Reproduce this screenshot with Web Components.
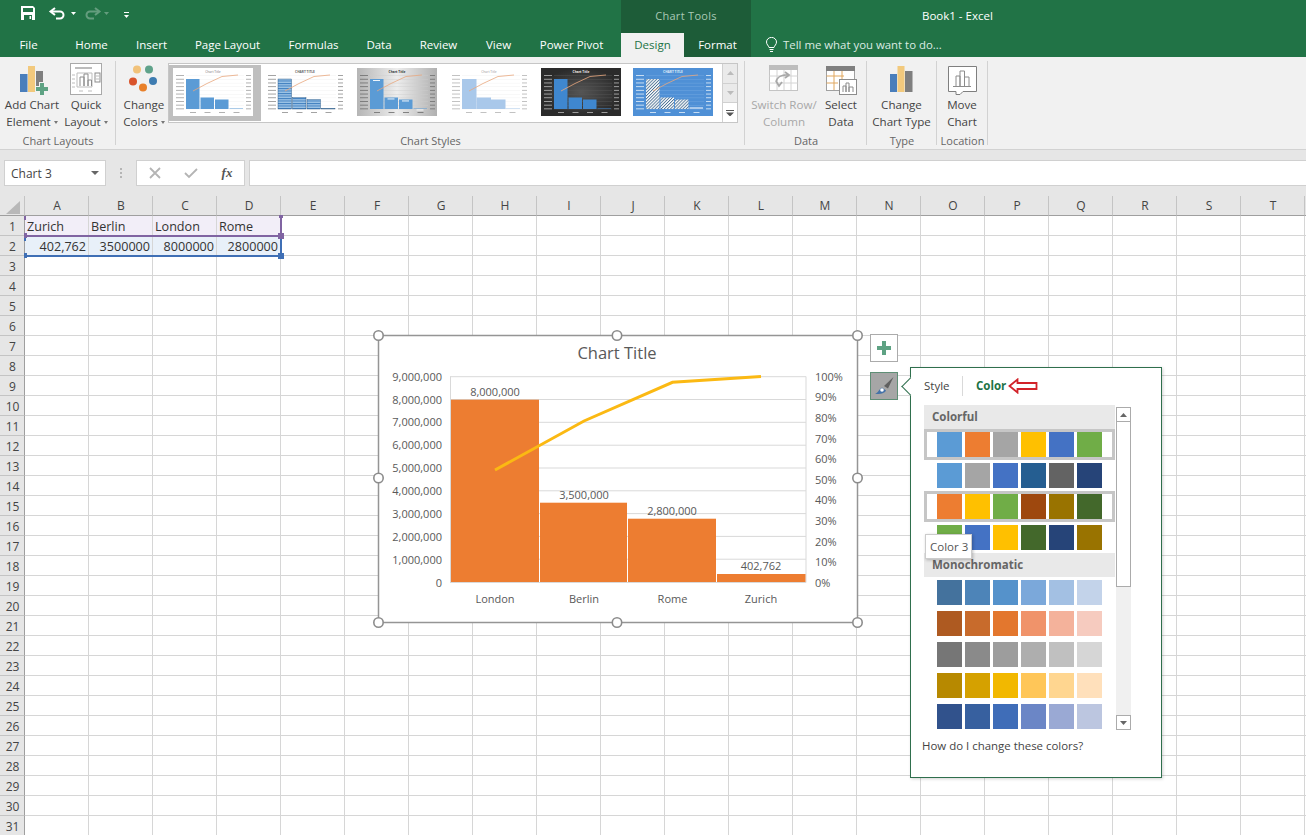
<!DOCTYPE html>
<html lang="en"><head><meta charset="utf-8"><title>Book1 - Excel</title>
<style>
html,body{margin:0;padding:0;width:1306px;height:835px;overflow:hidden;background:#fff;font-family:"Open Sans","Liberation Sans",sans-serif;font-size:11.5px;color:#444}
x-app{display:flex;flex-direction:column;width:1306px;height:835px;overflow:hidden}
svg{display:block}
</style>
<script>
function def(tag,css,html,setup){customElements.define(tag,class extends HTMLElement{
 constructor(){super();const r=this.attachShadow({mode:'open'});r.innerHTML='<style>'+css+'</style>'+html;}
 connectedCallback(){if(setup&&!this._d){this._d=1;setup(this,this.shadowRoot);}}
});}
def('x-titlebar',`
:host{display:grid;grid-template-rows:33px 24px;background:#217346;color:#fff;flex:none}
.top,.tabs{display:flex;align-items:stretch}
.qat{width:621px;display:flex;align-items:flex-start}
.ctx{background:#1d5c38}
.ctxt{width:130px;display:flex;align-items:center;justify-content:center;color:#a9c9b6;font-size:11px;letter-spacing:.3px;padding-bottom:2px;box-sizing:border-box}
.title{flex:1;display:flex;align-items:center;padding-left:171px;font-size:11.5px;padding-bottom:2px}
.fmt{display:flex}
.tell{display:flex;align-items:center;gap:5px;padding:0 0 1px 14px;color:#dcebe2;font-size:11.4px}
`,`<div class="top"><div class="qat"><slot name="qat"></slot></div><div class="ctxt ctx">Chart Tools</div><div class="title">Book1 - Excel</div></div>
<div class="tabs"><slot name="tabs"></slot><div class="fmt ctx"><slot name="ctx"></slot></div><div class="tell"><svg width="13" height="15" viewBox="0 0 13 15" fill="none" stroke="#fff" stroke-width="1"><path d="M4 10.500C3.600 8.600 1.500 7.600 1.500 5A5 4.600 0 0 1 11.500 5C11.500 7.600 9.400 8.600 9 10.500Z"/><path d="M4.500 12.500H8.500M5 14.500H8"/></svg><span>Tell me what you want to do...</span></div></div>`);
def('x-qat','.q{display:flex;align-items:center}:host{display:block}',`<div class="q">
<svg width="130" height="26" viewBox="0 0 130 26" fill="#fff"><path fill-rule="evenodd" d="M21 6H33L35 8V20H21ZM23 8V12H33V8ZM24 15V20H32V15Z"/><rect x="29.500" y="16" width="1.600" height="3"/>
<path d="M55 8L50.500 11.500L55 15" fill="none" stroke="#fff" stroke-width="2"/><path d="M51 11.500H60A3.500 3.500 0 0 1 60 18.500H56" fill="none" stroke="#fff" stroke-width="2"/><path d="M71 12H76L73.500 15Z"/>
<g opacity=".3"><path d="M95 8L99.500 11.500L95 15" fill="none" stroke="#fff" stroke-width="2"/><path d="M99 11.500H90A3.500 3.500 0 0 0 90 18.500H94" fill="none" stroke="#fff" stroke-width="2"/><path d="M104 12H109L106.500 15Z"/></g>
<rect x="124" y="12" width="5" height="1"/><path d="M124 15H129L126.500 18Z"/></svg></div>`);
def('x-tab',`:host{display:flex;align-items:center;justify-content:center;color:#fff;font-size:11.5px;flex:none;box-sizing:border-box;padding-bottom:1.500px}
:host([active]){background:#f1f1f1;color:#217346}`,'<slot></slot>',e=>{e.style.width=e.getAttribute('w')+'px';});
def('x-ribbon',`:host{display:flex;height:93px;background:#f1f1f1;border-bottom:1px solid #d2d2d2;box-sizing:border-box;flex:none}`,'<slot></slot>');
def('x-ribbon-group',`:host{display:flex;flex-direction:column;box-sizing:border-box;position:relative;flex:none}
.c{display:flex;padding-top:5px;height:66px}
.l{height:16px;margin-top:4px;display:flex;align-items:center;justify-content:center;color:#666;font-size:11px}
.s{position:absolute;right:0;top:4px;bottom:4px;width:1px;background:#d2d2d2}`,
`<div class="c"><slot></slot></div><div class="l"></div><div class="s"></div>`,(e,r)=>{e.style.width=e.getAttribute('w')+'px';r.querySelector('.l').textContent=e.getAttribute('label');if(e.hasAttribute('pad'))r.querySelector('.c').style.paddingLeft=e.getAttribute('pad')+'px';});
def('x-ribbon-button',`:host{display:flex;flex-direction:column;align-items:center;flex:none;color:#444;font-size:11.6px;line-height:16.500px;white-space:nowrap;text-align:center}
:host([disabled]){color:#a8a8a8}
.i{height:34px;margin-bottom:1px}.t{display:block}
.car{display:none;width:0;height:0;border:2.500px solid transparent;border-top:3px solid #777;border-bottom:0;margin-left:3px;vertical-align:middle}
:host([caret]) .car{display:inline-block}`,
`<div class="i"><slot name="icon"></slot></div><div class="t"><slot></slot><span class="car"></span></div>`,e=>{e.style.width=e.getAttribute('w')+'px';});
function thumb(v){
 const c=[{},{bg:'#fff',bar:'#5b9bd5',t:'Chart Title',tc:'#777',lab:'#aaa',gr:'#eee'},
 {bg:'#fff',bar:'url(#st)',st:'#1f4e79',t:'CHART TITLE',tc:'#666',lab:'#999',gr:'#eee',b:1},
 {bg:'url(#gg)',bar:'#5b9bd5',t:'Chart Title',tc:'#333',lab:'#777',gr:'#ccc',b:1,dl:'#fff'},
 {bg:'#fff',bar:'#a9c8ea',t:'Chart Title',tc:'#999',lab:'#bbb',gr:'#eee',join:1},
 {bg:'url(#dk)',bar:'#3f87cf',t:'Chart Title',tc:'#eee',lab:'#aaa',gr:'#5a5a5a',b:1},
 {bg:'#4f90d6',bar:'url(#ha)',t:'CHART TITLE',tc:'#dfeefa',lab:'#d5e6f6',gr:'#79abe2',b:1}][v];
 let s=`<svg width="80" height="48" viewBox="0 0 80 48"><defs>
 <pattern id="st" width="4" height="2.500" patternUnits="userSpaceOnUse"><rect width="4" height="2.500" fill="#9cc3e6"/><rect width="4" height="1" fill="#3f7fbf"/></pattern>
 <pattern id="ha" width="2.200" height="2.200" patternUnits="userSpaceOnUse" patternTransform="rotate(45)"><rect width="2.200" height="2.200" fill="#fff"/><rect width=".9" height="2.200" fill="#4a6f91"/></pattern>
 <linearGradient id="gg" x1="0" y1="0" x2="1" y2="0"><stop offset="0" stop-color="#b5b5b5"/><stop offset=".5" stop-color="#ededed"/><stop offset="1" stop-color="#b0b0b0"/></linearGradient>
 <radialGradient id="dk"><stop offset="0" stop-color="#555"/><stop offset="1" stop-color="#2b2b2b"/></radialGradient></defs>
 <rect width="80" height="48" fill="${c.bg}"/><text x="40" y="4.500" text-anchor="middle" font-size="3.200" font-weight="${c.b?700:400}" fill="${c.tc}">${c.t}</text>`;
 for(let i=0;i<10;i++){const y=7.500+i*3.700;s+=`<rect x="13" y="${y}" width="58" height=".4" fill="${c.gr}"/><rect x="3" y="${y-.4}" width="8" height=".9" fill="${c.lab}"/><rect x="73" y="${y-.4}" width="5" height=".9" fill="${c.lab}"/>`;}
 const g=c.join?0:1,bars=[[13,11],[27.500,29.500],[42,31.500],[56.500,40.500]];
 bars.forEach(([x,y],i)=>{const w=14.500-g;if(v==6&&i==3)s+=`<rect x="${x}" y="39.500" width="${w}" height="1" fill="#fff"/>`;else s+=`<rect x="${x}" y="${y}" width="${w}" height="${41-y}" fill="${c.bar}"${c.st?` stroke="${c.st}" stroke-width=".4"`:''}/>`;
 if(c.dl)s+=`<rect x="${x+3}" y="${y+1}" width="7" height=".9" fill="${c.dl}"/>`;
 s+=`<rect x="${x+4}" y="44" width="6" height=".9" fill="${c.lab}"/>`;});
 s+=`<path d="M20 23L34 15.500L49 8.500L65 7" fill="none" stroke="#e9a77e" stroke-width=".8"/></svg>`;return s;}
def('x-thumb',`:host{display:flex;align-items:center;padding-left:4px;box-sizing:border-box;width:92px;height:56px;flex:none}
:host([selected]){background:#bfbfbf}`,'<div></div>',(e,r)=>{r.querySelector('div').innerHTML=thumb(+e.getAttribute('v'));});
def('x-gallery',`:host{display:flex;width:570px;height:60px;box-sizing:border-box;border:1px solid #c6c6c6;background:#fff;margin-top:1px;flex:none}
.t{display:flex;flex:1;padding:1px 0 0 0;height:56px}
.sb{width:14px;display:flex;flex-direction:column;border-left:1px solid #d0d0d0}
.sb div{flex:1;display:flex;align-items:center;justify-content:center;border-bottom:1px solid #d0d0d0;background:#eaeaea}
.sb div:last-child{background:#fff;border-bottom:0}`,
`<div class="t"><slot></slot></div><div class="sb"><div><svg width="7" height="4"><path d="M0 4H7L3.500 0Z" fill="#bbb"/></svg></div><div><svg width="7" height="4"><path d="M0 0H7L3.500 4Z" fill="#bbb"/></svg></div><div><svg width="8" height="6"><path d="M0 0H8V1H0ZM0 2.500H8L4 6.500Z" fill="#555"/></svg></div></div>`);
def('x-formula-bar',`:host{display:flex;height:46px;box-sizing:border-box;padding:10px 0 10px 4px;background:#e6e6e6;flex:none}
.box{background:#fff;border:1px solid #d0d0d0;box-sizing:border-box;height:26px;display:flex;align-items:center}
.n{width:102px;padding:0 6px;justify-content:space-between;font-size:12px;color:#444}
.d{width:30px;display:flex;flex-direction:column;align-items:center;justify-content:center;gap:2px}
.d i{width:2px;height:2px;background:#b5b5b5;display:block}
.b{width:109px;display:grid;grid-template-columns:36px 36px 36px;justify-items:center}
.f{flex:1;margin-left:4px;border-right:0}
.fx{font:italic 700 13px "Liberation Serif",serif;color:#555}`,
`<div class="box n"><span>Chart 3</span><svg width="8" height="4"><path d="M0 0H8L4 4Z" fill="#666"/></svg></div>
<div class="d"><i></i><i></i><i></i></div>
<div class="box b"><svg width="12" height="12" fill="none" stroke="#b4b4b4" stroke-width="1.800"><path d="M1 1L11 11M11 1L1 11"/></svg><svg width="14" height="12" fill="none" stroke="#b4b4b4" stroke-width="1.800"><path d="M1 6L5 10L13 2"/></svg><span class="fx">fx</span></div>
<div class="box f"></div>`);
def('x-sheet',`:host{display:block;position:relative;flex:1;overflow:hidden;background:#fff}
.g{display:grid;grid-template-columns:25px repeat(20,64px) 1fr;grid-auto-rows:20px;font-size:12.600px;color:#333}
.g div{box-sizing:border-box;border-right:1px solid #d6d6d6;border-bottom:1px solid #d6d6d6;display:flex;align-items:center;padding:1px 2px 0;white-space:nowrap;overflow:hidden}
.g .h{background:#e6e6e6;justify-content:center;color:#444;font-size:12px;border-right-color:#c4c4c4;border-bottom-color:#c4c4c4;padding:1px 0 0 1px}
.g .ch{border-bottom-color:#9f9f9f;padding-top:0}
.g .rh{border-right-color:#9f9f9f}
.g .r{justify-content:flex-end;background:#e8f0f9}
.g .p{background:#f2eef8}
.tri{width:0;height:0;border-style:solid;border-width:0 0 13px 14px;border-color:transparent transparent #b8b8b8 transparent;margin-top:3px}`,
`<div class="g"></div><slot></slot>`,(e,r)=>{
 const d=[['Zurich','Berlin','London','Rome'],['402,762','3500000','8000000','2800000']];
 let h='<div class="h ch"><span class="tri"></span></div>';
 for(let c=0;c<20;c++)h+=`<div class="h ch">${String.fromCharCode(65+c)}</div>`;
 h+='<div class="h ch"></div>';
 for(let i=1;i<=31;i++){h+=`<div class="h rh">${i}</div>`;
  for(let c=0;c<21;c++){if(i<=2&&c<4)h+=i==1?`<div class="p">${d[0][c]}</div>`:`<div class="r">${d[1][c]}</div>`;else h+='<div></div>';}}
 r.querySelector('.g').innerHTML=h;});
def('x-range',`:host{position:absolute;box-sizing:border-box;border-right:2px solid var(--c);border-bottom:2px solid var(--c)}
i{position:absolute;background:var(--c);display:block}
.br{width:6px;height:6px;right:-4px;bottom:-4px}.tl{width:2px;height:4px;left:-1px;top:0}.bl{width:3px;height:5px;left:-1px;bottom:-3px}.tr{width:4px;height:3px;right:-3px;top:-1px}`,
`<i class="br"></i><i class="tl"></i><i class="bl"></i><i class="tr"></i>`);
const cy=[376,399,421,444,467,490,513,536,559,582],py=[376,396,417,438,458,479,499,520,541,561,582];
def('x-chart',`:host{position:absolute;left:370px;top:129px;width:500px;height:310px}
text{font-size:11px;fill:#595959;dominant-baseline:central}.t{font-size:16.500px;text-anchor:middle}.m{text-anchor:middle}.e{text-anchor:end}`,
`<svg width="500" height="310" viewBox="370 325 500 310"></svg>`,(e,r)=>{
 let s=`<rect x="378.500" y="335.500" width="479" height="287" fill="#fff" stroke="#959595" stroke-width="1.500"/><text class="t" x="617" y="352">Chart Title</text>`;
 const gy=[376.700,399.500,422.300,445.200,468,490.800,513.600,536.400,559.200];
 gy.forEach(y=>s+=`<rect x="450" y="${y-.5}" width="356" height="1" fill="#d9d9d9"/>`);
 s+=`<rect x="450" y="376.500" width="1" height="206" fill="#d9d9d9"/><rect x="805.500" y="376.500" width="1" height="206" fill="#d9d9d9"/><rect x="450" y="582" width="356" height="1" fill="#d9d9d9"/>`;
 [[451,399.700,88],[540,502.700,87],[628,518.700,88],[717,574,88.500]].forEach(([x,y,w])=>s+=`<rect x="${x}" y="${y}" width="${w}" height="${582-y}" fill="#ed7d31"/>`);
 s+=`<path d="M495 470L584 421L672.500 382.300L761 376.500" fill="none" stroke="#fbb913" stroke-width="3"/>`;
 cy.forEach((y,i)=>s+=`<text class="e" x="442" y="${y}">${i==9?'0':(9-i)+',000,000'}</text>`);
 py.forEach((y,i)=>s+=`<text x="815" y="${y}">${100-i*10}%</text>`);
 [['8,000,000',495,391],['3,500,000',584,494],['2,800,000',672,510],['402,762',761,565],['London',495,598],['Berlin',584,598],['Rome',672.500,598],['Zurich',761,598]].forEach(([t,x,y])=>s+=`<text class="m" x="${x}" y="${y}">${t}</text>`);
 [[378.500,335.500],[617,335.500],[857.500,335.500],[378.500,478],[857.500,478],[378.500,622.500],[617,622.500],[857.500,622.500]].forEach(([x,y])=>s+=`<circle cx="${x}" cy="${y}" r="4.700" fill="#fff" stroke="#8c8c8c" stroke-width="1.600"/>`);
 r.querySelector('svg').innerHTML=s;});
def('x-side-buttons',`:host{position:absolute;left:870px;top:138px;display:flex;flex-direction:column;gap:10px}
div{width:28px;height:28px;box-sizing:border-box;display:flex;align-items:center;justify-content:center;background:#fff;border:1px solid #ababab}
.on{background:#a6a6a6;border-color:#5f8f76}`,
`<div><svg width="14" height="14"><path d="M5 0H9V5H14V9H9V14H5V9H0V5H5Z" fill="#5ea283"/></svg></div>
<div class="on"><svg width="26" height="26" viewBox="0 0 26 26"><path d="M22.500 4L17 15.500L13 13Z" fill="#606060"/><path d="M4 21C7 20 8 16 11 14.500L15 17.500C14 20 10 21.500 4 21Z" fill="#4472a8"/><circle cx="11" cy="17" r="1.800" fill="#fff"/></svg></div>`);
def('x-swatch-row',`:host{display:flex;gap:3px;height:31px;box-sizing:border-box;padding:0 10px;border:3px solid transparent}
:host([hi]){border-color:#c6c6c6}
i{display:block;width:25px;height:25px}`,'',(e,r)=>{e.getAttribute('c').split(' ').forEach(c=>{const i=document.createElement('i');i.style.background='#'+c;r.appendChild(i);});});
def('x-list-head',`:host{display:flex;align-items:center;height:24px;box-sizing:border-box;padding:0 0 1px 8px;background:#e9e9e9;font-weight:700;color:#666;font-size:11.500px}`,'<slot></slot>');
def('x-scrollbar',`:host{display:flex;flex-direction:column;width:15px;height:323px;margin:2px 0 0 1px;background:#f0f0f0;flex:none}
div{box-sizing:border-box;background:#fff;border:1px solid #ababab;display:flex;align-items:center;justify-content:center;flex:none}
.b{height:15px}.th{height:165px;border-top:0}.sp{flex:1;background:none;border:0}`,
`<div class="b"><svg width="7" height="4"><path d="M0 4H7L3.500 0Z" fill="#666"/></svg></div><div class="th"></div><div class="sp"></div><div class="b"><svg width="7" height="4"><path d="M0 0H7L3.500 4Z" fill="#666"/></svg></div>`);
def('x-color-panel',`:host{position:absolute;left:910px;top:171px;width:252px;height:411px;box-sizing:border-box;background:#fff;border:1px solid #2f6f4d;box-shadow:1px 1px 3px rgba(0,0,0,.18);padding:0 0 0 13px;display:flex;flex-direction:column;font-size:11.500px;color:#444}
.notch{position:absolute;left:-7px;top:12px;width:13px;height:13px;background:#fff;border-left:1px solid #2f6f4d;border-bottom:1px solid #2f6f4d;transform:rotate(45deg);box-sizing:border-box}
.hd{display:flex;align-items:center;height:37px;position:relative;padding-bottom:2px;box-sizing:border-box}
.st{width:38px;border-right:1px solid #d9d9d9;height:20px;line-height:20px}
.co{margin-left:13px;font-weight:700;color:#217346}
.ar{margin-left:2px;margin-top:1px}
.body{display:flex}
.list{width:191px;height:327px;flex:none}
.foot{margin:5px 0 0 -2px;line-height:18px;font-size:11.450px}
.tip{position:absolute;left:14px;top:166px;width:47px;height:25px;box-sizing:border-box;border:1px solid #ccc;background:#fff;box-shadow:1px 1px 3px rgba(0,0,0,.25);display:flex;align-items:center;padding-left:4px;color:#555;white-space:nowrap;font-size:11.500px}`,
`<div class="notch"></div><div class="hd"><span class="st">Style</span><span class="co">Color</span><svg class="ar" width="30" height="16" viewBox="0 0 30 16"><path d="M1.500 8L9.500 1.500V5H28.500V11H9.500V14.500Z" fill="#fff" stroke="#d2232a" stroke-width="1.800"/></svg></div>
<div class="body"><div class="list"><slot></slot></div><x-scrollbar></x-scrollbar></div>
<div class="foot">How do I change these colors?</div><div class="tip">Color 3</div>`);
</script></head><body>
<x-app>
<x-titlebar>
 <x-qat slot="qat"></x-qat>
 <x-tab slot="tabs" w="57">File</x-tab><x-tab slot="tabs" w="69">Home</x-tab><x-tab slot="tabs" w="51">Insert</x-tab><x-tab slot="tabs" w="101">Page Layout</x-tab><x-tab slot="tabs" w="71">Formulas</x-tab><x-tab slot="tabs" w="60">Data</x-tab><x-tab slot="tabs" w="59">Review</x-tab><x-tab slot="tabs" w="61">View</x-tab><x-tab slot="tabs" w="85">Power Pivot</x-tab><x-tab slot="tabs" w="7"></x-tab>
 <x-tab slot="ctx" w="63" active>Design</x-tab><x-tab slot="ctx" w="67">Format</x-tab>
</x-titlebar>
<x-ribbon>
 <x-ribbon-group w="116" label="Chart Layouts">
  <x-ribbon-button w="64" caret><svg slot="icon" width="34" height="34"><rect x="5" y="12" width="7.500" height="18" fill="#4a7ebb"/><rect x="13" y="4" width="7" height="26" fill="#f2c97d"/><rect x="21" y="9" width="7" height="21" fill="#7f7f7f"/><path d="M24 20H30V24H34V30H30V34H24V30H20V24H24Z" fill="#f1f1f1"/><path d="M25 21H29V25H33V29H29V33H25V29H21V25H25Z" fill="#5ea283"/></svg>Add Chart<br>Element</x-ribbon-button>
  <x-ribbon-button w="44" caret><svg slot="icon" width="34" height="34" fill="none"><rect x="1.500" y="1.500" width="31" height="31" fill="#fff" stroke="#a9a9a9"/><path d="M6 6H23" stroke="#a6a6a6" stroke-width="1.500"/><path d="M8 11H23V25H8Z" stroke="#bdbdbd"/><path d="M11 24V15H15V24M15 24V12H19V24M19 24V18H22.500V24" stroke="#8c8c8c"/><rect x="26" y="11" width="5" height="9" stroke="#8c8c8c"/><path d="M27 14H30M27 17H30M3 13H6M3 17H6M3 21H6M3 25H6M10 29H14M19 29H23" stroke="#bdbdbd"/></svg>Quick<br>Layout</x-ribbon-button>
 </x-ribbon-group>
 <x-ribbon-group w="629" label="Chart Styles" pad="4">
  <x-ribbon-button w="48" caret><svg slot="icon" width="34" height="34"><circle cx="10" cy="7.500" r="4" fill="#f1c27a"/><circle cx="22" cy="7.500" r="4" fill="#5fa28a"/><circle cx="6" cy="19.500" r="4" fill="#d9542b"/><circle cx="26" cy="19" r="4" fill="#3e7cb1"/><circle cx="16" cy="25.500" r="4" fill="#e8802a"/></svg>Change<br>Colors</x-ribbon-button>
  <x-gallery><x-thumb v="1" selected></x-thumb><x-thumb v="2"></x-thumb><x-thumb v="3"></x-thumb><x-thumb v="4"></x-thumb><x-thumb v="5"></x-thumb><x-thumb v="6"></x-thumb></x-gallery>
 </x-ribbon-group>
 <x-ribbon-group w="122" label="Data">
  <x-ribbon-button w="78" disabled><svg slot="icon" width="34" height="34" fill="none"><rect x="2.500" y="3.500" width="28" height="25" fill="#fff" stroke="#c4c4c4"/><rect x="2" y="3" width="29" height="5" fill="#bdbdbd"/><path d="M2.500 14H30.500M2.500 21H30.500M10 8V28M17 8V28M24 8V28" stroke="#d4d4d4"/><path d="M9 20C10 15 15 12.500 21 13M18 10L22 13L18 16M9 19L12 24L15 20" stroke="#a8a8a8" stroke-width="1.800"/></svg>Switch Row/<br>Column</x-ribbon-button>
  <x-ribbon-button w="36"><svg slot="icon" width="34" height="34" fill="none"><rect x="2.500" y="4.500" width="28" height="24" fill="#fff" stroke="#a0a0a0"/><rect x="2" y="4" width="29" height="5" fill="#7f7f7f"/><path d="M2.500 14H20M2.500 21H14M10 9V28M18 9V17" stroke="#e0a75f"/><rect x="15.500" y="17.500" width="17" height="15" fill="#fff" stroke="#8c8c8c"/><path d="M19 30V24H22V30M22 30V21H25V30M25 30V25H29V30" stroke="#8c8c8c"/></svg>Select<br>Data</x-ribbon-button>
 </x-ribbon-group>
 <x-ribbon-group w="70" label="Type">
  <x-ribbon-button w="69"><svg slot="icon" width="34" height="34"><rect x="5" y="12" width="7" height="18" fill="#4a7ebb"/><rect x="12.500" y="4" width="7" height="26" fill="#f2c97d"/><rect x="20" y="9" width="7.500" height="21" fill="#7f7f7f"/></svg>Change<br>Chart Type</x-ribbon-button>
 </x-ribbon-group>
 <x-ribbon-group w="51" label="Location">
  <x-ribbon-button w="50"><svg slot="icon" width="34" height="34" fill="none" stroke="#7f7f7f"><path d="M3.500 4.500H31.500V29.500H18L15 32.500H11V29.500H3.500Z" fill="#fff"/><path d="M11 24V14H15V24M15 24V9H19.500V24M19.500 24V15H24V24M8 24.500H26" stroke="#8c8c8c"/></svg>Move<br>Chart</x-ribbon-button>
 </x-ribbon-group>
</x-ribbon>
<x-formula-bar></x-formula-bar>
<x-sheet>
 <x-range style="--c:#3f6fb5;left:25px;top:41px;width:257px;height:20px"></x-range>
 <x-range style="--c:#8064a2;left:25px;top:20px;width:257px;height:21px"></x-range>
 <x-chart></x-chart>
 <x-side-buttons></x-side-buttons>
 <x-color-panel>
  <x-list-head>Colorful</x-list-head>
  <x-swatch-row hi c="5b9bd5 ed7d31 a5a5a5 ffc000 4472c4 70ad47"></x-swatch-row>
  <x-swatch-row c="5b9bd5 a5a5a5 4472c4 255e91 636363 264478"></x-swatch-row>
  <x-swatch-row hi c="ed7d31 ffc000 70ad47 9e480e 997300 43682b"></x-swatch-row>
  <x-swatch-row c="70ad47 4472c4 ffc000 43682b 264478 997300"></x-swatch-row>
  <x-list-head>Monochromatic</x-list-head>
  <x-swatch-row c="44729d 4d84b8 5592cb 7ba8da a3c0e3 c3d3ea"></x-swatch-row>
  <x-swatch-row c="ae5a21 c86b2c e3772e f0936a f4b29b f6cbbf"></x-swatch-row>
  <x-swatch-row c="767676 8a8a8a 9d9d9d aeaeae c0c0c0 d6d6d6"></x-swatch-row>
  <x-swatch-row c="b78900 d5a100 f2b800 ffc658 ffd690 ffe0bb"></x-swatch-row>
  <x-swatch-row c="31528c 37609f 3f6db8 6b86c6 9aa9d4 bcc6e0"></x-swatch-row>
 </x-color-panel>
</x-sheet>
</x-app>
</body></html>
